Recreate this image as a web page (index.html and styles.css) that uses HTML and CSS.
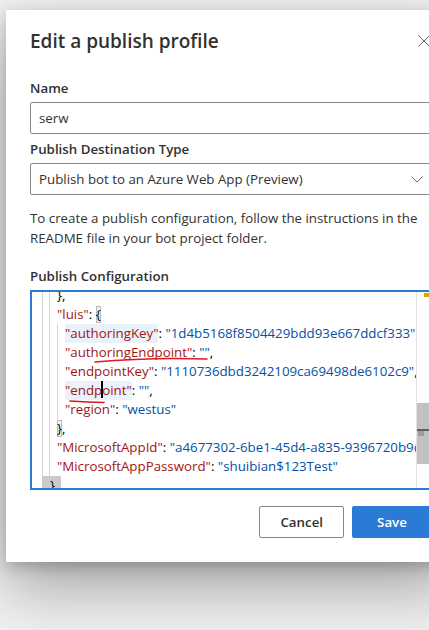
FILE: index.html
```html
<!DOCTYPE html>
<html lang="en">
<head>
  <meta charset="UTF-8">
  <title>Edit a publish profile</title>
  <link rel="stylesheet" href="styles.css">
</head>
<body>

  <div class="dialog">
    <div class="dialog-header">
      <h2 class="dialog-title">Edit a publish profile</h2>
      <button class="close" aria-label="Close">
        <svg width="12" height="12" viewBox="0 0 12 12">
          <path d="M0.5 0.5 L11.5 11.5 M11.5 0.5 L0.5 11.5" stroke="#6b6967" stroke-width="1" fill="none"/>
        </svg>
      </button>
    </div>

    <div class="dialog-body">
      <div class="field field-name">
        <label class="field-label">Name</label>
        <div class="text-field">serw</div>
      </div>

      <div class="field field-type">
        <label class="field-label">Publish Destination Type</label>
        <div class="dropdown">
          <span>Publish bot to an Azure Web App (Preview)</span>
          <svg class="chevron" width="12" height="7" viewBox="0 0 12 7">
            <path d="M0.5 0.5 L6 6 L11.5 0.5" stroke="#6b6967" stroke-width="1" fill="none"/>
          </svg>
        </div>
      </div>

      <p class="hint">To create a publish configuration, follow the instructions in the README file in your bot project folder.</p>

      <div class="field">
        <label class="field-label">Publish Configuration</label>
        <div class="editor">
          <div class="code">
            <div class="lines">
              <div class="block-1">
                <div class="ln l2">},</div>
                <div class="ln l2"><span class="k">"luis"</span>: <span class="match">{</span></div>
                <div class="block-3">
                  <div class="ln l3"><span class="hl"><span class="k">"authoringKey"</span></span>: <span class="v">"1d4b5168f8504429bdd93e667ddcf333"</span>,</div>
                  <div class="ln l3"><span class="k">"authoringEndpoint"</span>: <span class="v">""</span>,</div>
                  <div class="ln l3"><span class="k">"endpointKey"</span>: <span class="v">"1110736dbd3242109ca69498de6102c9"</span>,</div>
                  <div class="ln l3"><span class="hl"><span class="k">"endp<span class="cursor"></span>oint"</span></span>: <span class="v">""</span>,</div>
                  <div class="ln l3"><span class="k">"region"</span>: <span class="v">"westus"</span></div>
                </div>
                <div class="ln l2"><span class="match">}</span>,</div>
                <div class="ln l2"><span class="k">"MicrosoftAppId"</span>: <span class="v">"a4677302-6be1-45d4-a835-9396720b9d0e"</span>,</div>
                <div class="ln l2"><span class="k">"MicrosoftAppPassword"</span>: <span class="v">"shuibian$123Test"</span></div>
              </div>
              <div class="ln"><span class="last-match">},</span></div>
            </div>
          </div>
          <div class="scrollbar">
            <span class="mark-warn"></span>
            <div class="thumb"></div>
            <span class="mark-cursor"></span>
            <span class="mark-sel"></span>
          </div>
          <svg class="ink" width="200" height="130" viewBox="0 0 200 130">
            <path d="M63 70 Q118 65 175 67" stroke="#e0161b" stroke-width="1.6" fill="none" stroke-linecap="round"/>
            <path d="M38 109 Q56 110 72 110.5" stroke="#e0161b" stroke-width="1.6" fill="none" stroke-linecap="round"/>
          </svg>
        </div>
      </div>
    </div>

    <div class="dialog-footer">
      <button class="btn">Cancel</button>
      <button class="btn primary">Save</button>
    </div>
  </div>

</body>
</html>
```

FILE: styles.css
```css
* {
  box-sizing: border-box;
}

html, body {
  margin: 0;
  height: 100%;
}

body {
  overflow: hidden;
  background: #f1f1f1;
  font-family: 'Open Sans', 'Noto Sans', sans-serif;
  font-size: 13.3px;
  color: #323130;
}

.dialog {
  width: 450px;
  margin: 10px 0 0 6px;
  background: #fff;
  box-shadow: 0 26px 58px rgba(0, 0, 0, 0.32), 0 5px 14px rgba(0, 0, 0, 0.2);
}

.dialog-header {
  display: flex;
  align-items: center;
  justify-content: space-between;
  padding: 17px 24px 0;
}

.dialog-title {
  margin: 0;
  font-size: 19px;
  font-weight: 600;
  line-height: 28px;
}

.close {
  width: 12px;
  height: 12px;
  padding: 0;
  margin-right: 2px;
  border: none;
  background: none;
  display: flex;
}

.dialog-body {
  padding: 23px 24px 0;
}

.field-label {
  display: block;
  font-weight: 600;
  line-height: 20px;
  margin-bottom: 4px;
}

.field-name {
  margin-bottom: 5px;
}

.field-type {
  margin-bottom: 13px;
}

.text-field,
.dropdown {
  height: 32px;
  border: 1px solid #8a8886;
  border-radius: 2px;
  padding: 0 8px;
  line-height: 30px;
}

.dropdown {
  display: flex;
  align-items: center;
  justify-content: space-between;
}

.hint {
  margin: 0 0 18px;
  line-height: 20px;
}

/* code editor */
.editor {
  position: relative;
  height: 200px;
  border: 2px solid #2b7bd4;
  display: flex;
}

.code {
  flex: 1;
  overflow: hidden;
  color: #000;
}

.lines {
  margin-top: -6px;
  padding-left: 10px;
}

.ln {
  height: 19px;
  line-height: 19px;
  white-space: nowrap;
}

.l2 { padding-left: 15px; }
.l3 { padding-left: 23px; }

.block-1 {
  background:
    linear-gradient(#d4d4d4, #d4d4d4) 0 0 / 1px 100% no-repeat,
    linear-gradient(#d4d4d4, #d4d4d4) 7px 0 / 1px 100% no-repeat;
}

.block-3 {
  background: linear-gradient(#d4d4d4, #d4d4d4) 15px 0 / 1px 100% no-repeat;
}

.k { color: #a31515; }
.v { color: #0451a5; }

.hl {
  display: inline-block;
  background: #e9f1fb;
  line-height: 19px;
}

.match {
  display: inline-block;
  line-height: 17px;
  box-shadow: inset 0 0 0 1px #b9b9b9;
  background: #f3f3f3;
}

.cursor {
  display: inline-block;
  width: 2px;
  height: 17px;
  margin: 0 -1px;
  vertical-align: -3px;
  background: #000;
}

.last-match {
  display: inline-block;
  line-height: 19px;
  padding: 0 3px 0 8px;
  background: #cbcbcb;
}

.scrollbar {
  position: relative;
  width: 14px;
  border-left: 1px solid #e3e3e3;
}

.thumb {
  margin-top: 111px;
  height: 61px;
  background: #c1c1c1;
}

.mark-warn {
  position: absolute;
  top: 1px;
  right: 0;
  width: 6px;
  height: 4px;
  background: #e2a300;
}

.mark-cursor {
  position: absolute;
  top: 137px;
  left: 0;
  right: 0;
  height: 2px;
  background: #606060;
}

.mark-sel {
  position: absolute;
  top: 139px;
  left: 1px;
  width: 6px;
  height: 5px;
  background: #9c9c9c;
}

.ink {
  position: absolute;
  left: 0;
  top: 0;
  pointer-events: none;
}

/* footer */
.dialog-footer {
  display: flex;
  justify-content: flex-end;
  gap: 8px;
  padding: 16px 24px 24px;
}

.btn {
  height: 32px;
  min-width: 80px;
  padding: 0 20px;
  border: 1px solid #8a8886;
  border-radius: 2px;
  background: #fff;
  color: #323130;
  font-family: inherit;
  font-size: 13.3px;
  font-weight: 600;
}

.btn.primary {
  background: #2b7bd6;
  border-color: #2b7bd6;
  color: #fff;
}
```
